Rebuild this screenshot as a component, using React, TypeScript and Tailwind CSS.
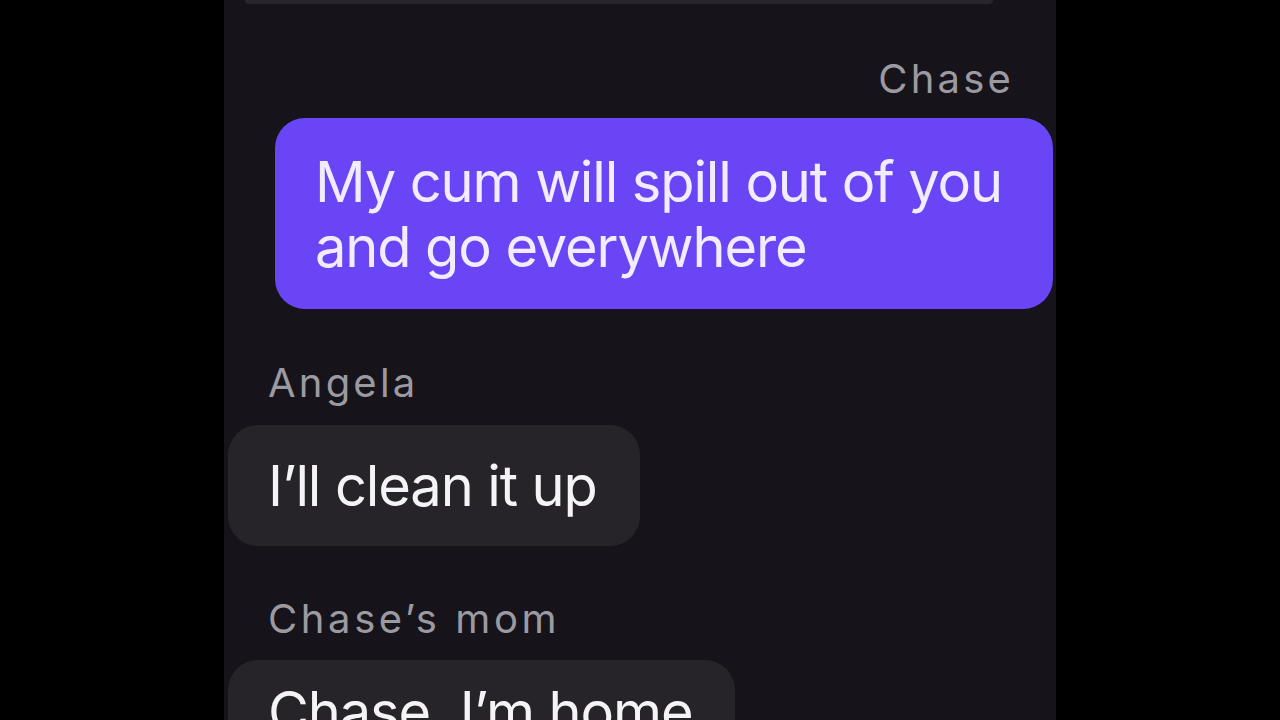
export default function App() {
  const font = { fontFamily: "Inter, 'Noto Sans', sans-serif" };
  return (
    <div className="w-[1280px] h-[720px] bg-black flex justify-center overflow-hidden" style={font}>
      <div className="w-[832px] h-[720px] bg-[#16141a] flex flex-col overflow-hidden">
        <div className="shrink-0 ml-[21px] w-[748px] h-[4px] bg-[#29272d] rounded-b-[24px]" />
        <div className="shrink-0 mt-[53px] pr-[42px] text-right text-[40px] tracking-[0.08em] leading-[44px] text-[#9c9aa1]">Chase</div>
        <div className="shrink-0 mt-[17px] ml-[51px] w-[778px] h-[191px] bg-[#6a45f5] rounded-[30px] pl-[40px] pt-[32px] text-[56px] tracking-[-0.02em] leading-[65px] text-[#f1ecff]">
          My cum will spill out of you
          <br />
          and go everywhere
        </div>
        <div className="shrink-0 mt-[52px] ml-[44px] text-[40px] tracking-[0.08em] leading-[44px] text-[#9c9aa1]">Angela</div>
        <div className="shrink-0 mt-[20px] ml-[4px] w-[412px] h-[121px] bg-[#262429] rounded-[30px] pl-[40px] flex items-center text-[56px] tracking-[-0.02em] text-[#f4f4f6]">
          I’ll clean it up
        </div>
        <div className="shrink-0 mt-[51px] ml-[44px] text-[40px] tracking-[0.09em] leading-[44px] text-[#9c9aa1]">Chase’s mom</div>
        <div className="shrink-0 mt-[19px] ml-[4px] w-[507px] h-[121px] bg-[#262429] rounded-[30px] pl-[40px] pt-[22px] text-[56px] tracking-[-0.02em] leading-[60px] text-[#f4f4f6]">
          Chase, I’m home
        </div>
      </div>
    </div>
  );
}
